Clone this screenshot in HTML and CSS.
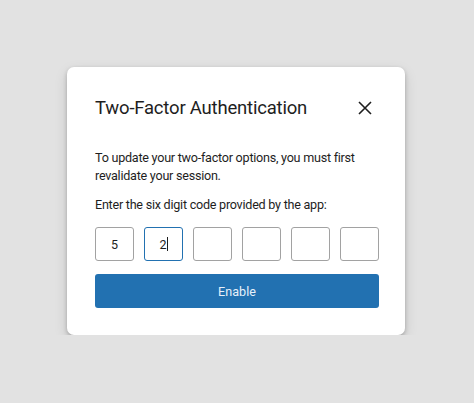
FILE: index.html
```html
<!DOCTYPE html>
<html lang="en">
<head>
  <meta charset="UTF-8" />
  <title>Two-Factor Authentication</title>
  <link rel="stylesheet" href="styles.css">
</head>
<body>
  <div class="modal">
    <div class="modal-header">
      <h1 class="modal-title">Two-Factor Authentication</h1>
      <button class="close-btn" aria-label="Close">
        <svg width="14" height="14" viewBox="0 0 14 14">
          <path d="M1 1L13 13M13 1L1 13" stroke="#1e1e1e" stroke-width="1.6" fill="none" />
        </svg>
      </button>
    </div>

    <p class="intro">To update your two-factor options, you must first revalidate your session.</p>
    <p class="label">Enter the six digit code provided by the app:</p>

    <div class="code-row">
      <div class="digit">5</div>
      <div class="digit active">2<span class="caret"></span></div>
      <div class="digit"></div>
      <div class="digit"></div>
      <div class="digit"></div>
      <div class="digit"></div>
    </div>

    <button class="enable-btn">Enable</button>
  </div>
</body>
</html>
```

FILE: styles.css
```css
body {
  background-color: #e2e2e2;
  margin: 0;
  padding: 67px 0 0 67px;
  font-family: 'Roboto', 'Noto Sans', sans-serif;
  color: #1e1e1e;
}
.modal {
  box-sizing: border-box;
  width: 338px;
  height: 268px;
  background-color: #fff;
  border-radius: 7px;
  padding: 0 26px 0 28px;
  box-shadow: 0 2px 4px rgba(0, 0, 0, 0.22), 0 5px 14px rgba(0, 0, 0, 0.12);
}
.modal-header {
  display: flex;
  align-items: center;
  justify-content: space-between;
  height: 82px;
}
.modal-title {
  margin: 0;
  font-size: 18.5px;
  font-weight: 400;
  letter-spacing: -0.2px;
}
.close-btn {
  background: none;
  border: none;
  padding: 0;
  margin-right: 7px;
  width: 14px;
  height: 14px;
  display: flex;
}
.intro, .label {
  font-size: 12.6px;
  line-height: 18px;
  letter-spacing: -0.25px;
}
.intro {
  margin: 0 0 11px 0;
  width: 270px;
}
.label {
  margin: 0 0 13px 0;
}
.code-row {
  display: flex;
  gap: 10px;
  margin-bottom: 13px;
}
.digit {
  width: 39px;
  height: 34px;
  box-sizing: border-box;
  border: 1px solid #a2a2a2;
  border-radius: 3px;
  display: flex;
  align-items: center;
  justify-content: center;
  font-size: 12.5px;
}
.digit.active {
  border: 1.5px solid #2271b1;
}
.caret {
  width: 1px;
  height: 14px;
  background-color: #1e1e1e;
}
.enable-btn {
  display: block;
  width: 284px;
  height: 34px;
  border: none;
  border-radius: 3px;
  background-color: #2271b1;
  color: #e6f0fa;
  font-family: 'Roboto', 'Noto Sans', sans-serif;
  font-size: 12.6px;
}
```
